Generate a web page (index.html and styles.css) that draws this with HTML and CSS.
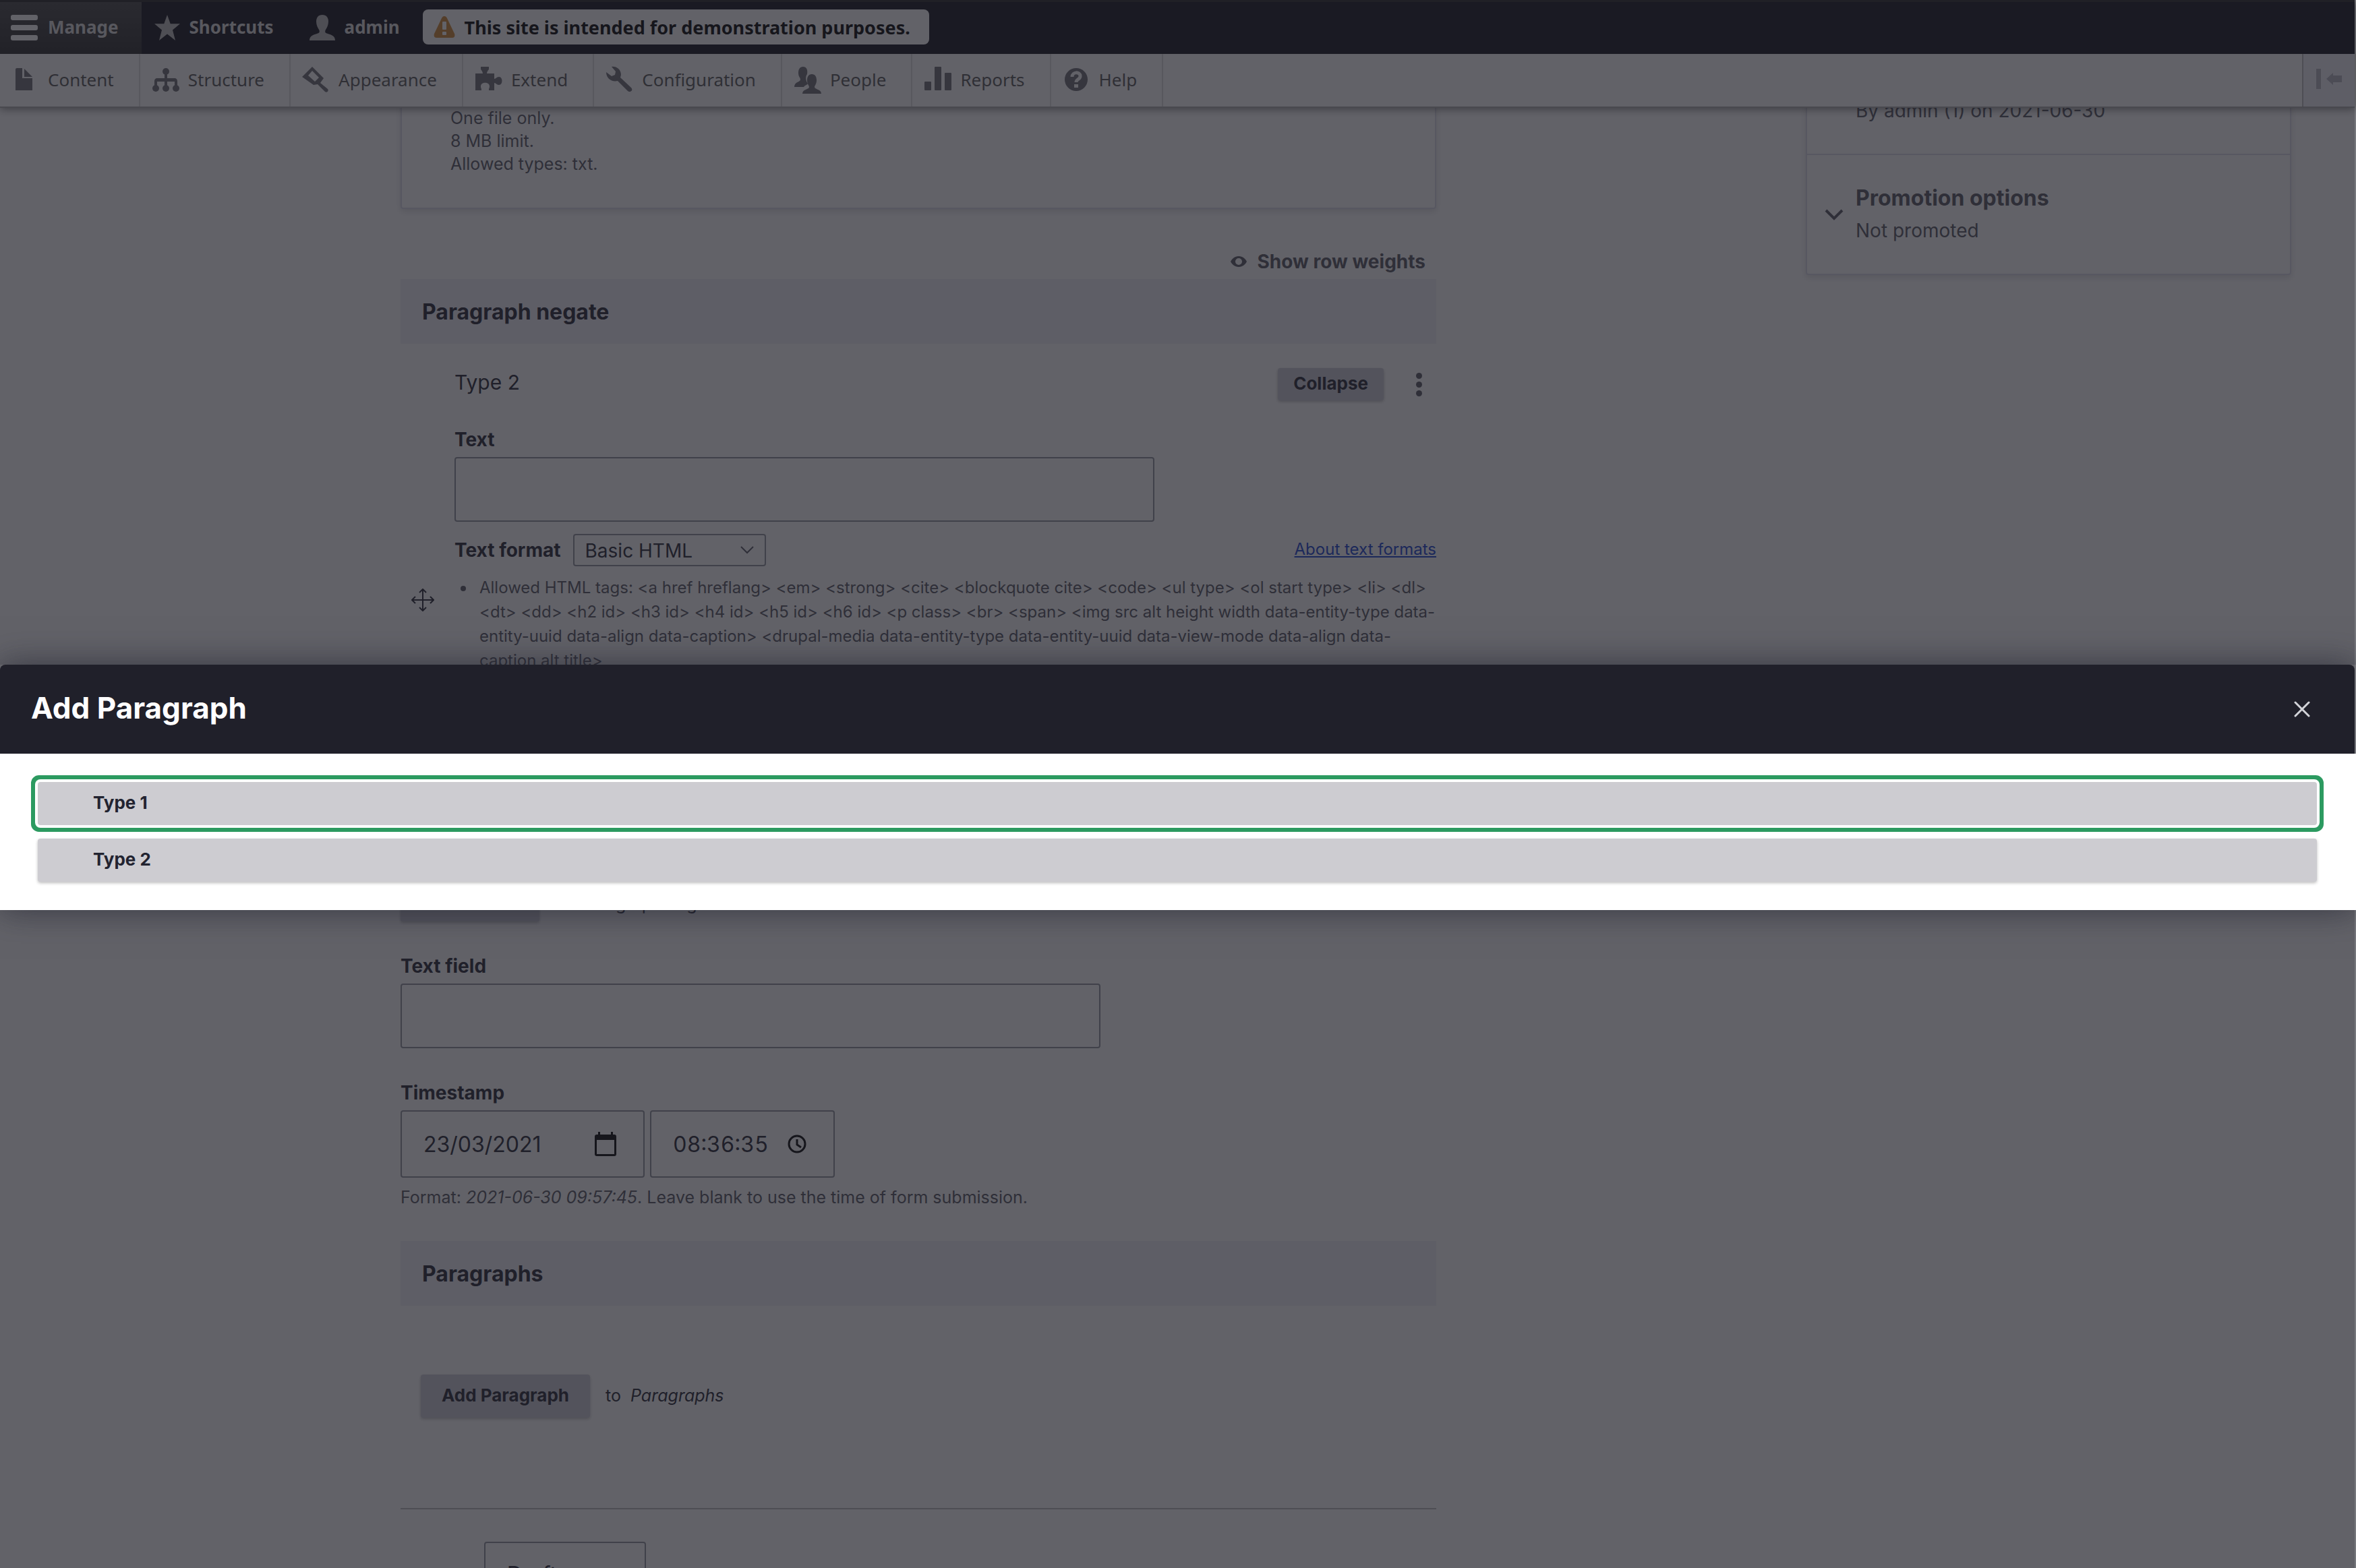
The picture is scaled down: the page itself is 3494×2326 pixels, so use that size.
FILE: index.html
```html
<!DOCTYPE html>
<html lang="en">
<head>
    <meta charset="UTF-8">
    <title>Edit content</title>
    <link rel="stylesheet" href="styles.css">
</head>
<body>

<header class="toolbar">
    <nav class="toolbar-bar">
        <a href="#" class="tab active">
            <svg class="icon light" viewBox="0 0 40 40"><rect x="-2" y="2" width="40" height="8" rx="3"/><rect x="-2" y="17" width="40" height="8" rx="3"/><rect x="-2" y="32" width="40" height="8" rx="3"/></svg>
            Manage
        </a>
        <a href="#" class="tab">
            <svg class="icon" viewBox="0 0 40 40"><path d="M20 2l4.7 13.300H39L28 24.500 32 40 20 30.500 8 40l4-15.500L1 15.300h14.300z"/></svg>
            Shortcuts
        </a>
        <a href="#" class="tab">
            <svg class="icon" viewBox="0 0 40 40"><path d="M20 2c-6 0-9 4-9 10 0 5 2 9 4 12 2 4 0 5-3 6C5 32 1 34 1 40h38c0-6-4-8-11-10-3-1-5-2-3-6 2-3 4-7 4-12 0-6-3-10-9-10z"/></svg>
            admin
        </a>
        <div class="notice">
            <svg class="notice-icon" viewBox="0 0 32 34"><path d="M16 1c2 0 3 1 4 3l11 23c1 3 0 6-3 6H4c-3 0-4-3-3-6L12 4c1-2 2-3 4-3z"/><rect class="mark" x="13" y="9" width="6" height="12" rx="1"/><rect class="mark" x="13" y="24" width="6" height="5" rx="1"/></svg>
            This site is intended for demonstration purposes.
        </div>
    </nav>
    <nav class="toolbar-tray">
        <a href="#" class="tray-link">
            <svg class="icon" viewBox="0 0 40 40"><path d="M7 3h8v15h15v18H5V5a2 2 0 0 1 2-2z"/><path d="M18 4l12 12H18z"/></svg>
            Content
        </a>
        <a href="#" class="tray-link">
            <svg class="icon" viewBox="0 0 40 40"><circle cx="20" cy="8" r="5"/><circle cx="5" cy="33" r="5"/><circle cx="20" cy="33" r="5"/><circle cx="35" cy="33" r="5"/><path d="M18 10h4v8h10c4 0 5 2 5 5v8h-4v-8H22v8h-4v-8H7v8H3v-8c0-3 1-5 5-5h10z"/></svg>
            Structure
        </a>
        <a href="#" class="tray-link">
            <svg class="icon" viewBox="0 0 40 40"><path fill-rule="evenodd" d="M14 1l17 17-5 7 11 9c2 3-1 6-4 4L22 27l-6 1L-1 16zM14 7L8 14l10 9 6-6z"/></svg>
            Appearance
        </a>
        <a href="#" class="tray-link">
            <svg class="icon" viewBox="0 0 40 40"><path d="M8 1h12v4c-3 3-3 6-3 6h11v8c3 0 3-3 7-3 6 0 6 12 0 12-4 0-4-3-7-3v11h-8c0-4 1-3 1-6 0-7-13-7-13 0 0 3 1 2 1 6H0V11h11s0-3-3-6z"/></svg>
            Extend
        </a>
        <a href="#" class="tray-link">
            <svg class="icon" viewBox="0 0 40 40"><path d="M8 1c7-1 14 4 14 12l-1 4 16 15c4 4-2 8-5 5L17 22C8 24 0 18 0 9l8 6 5-2 1-5z"/></svg>
            Configuration
        </a>
        <a href="#" class="tray-link">
            <svg class="icon" viewBox="0 0 40 40"><path d="M13 1c-5 0-7 4-7 9 0 6 3 7 3 10 0 4-9 3-9 11h14c2-3 5-3 6-5-3-4-4-10-1-14C20 5 18 1 13 1z"/><path d="M26 12c-5 0-7 4-7 9 0 6 3 8 3 10 0 4-10 3-10 10h28c0-7-10-6-10-10 0-2 3-4 3-10 0-5-2-9-7-9z"/></svg>
            People
        </a>
        <a href="#" class="tray-link">
            <svg class="icon" viewBox="0 0 40 40"><rect x="0" y="23" width="10" height="13" rx="1"/><rect x="15" y="1" width="10" height="35" rx="1"/><rect x="30" y="10" width="10" height="26" rx="1"/></svg>
            Reports
        </a>
        <a href="#" class="tray-link">
            <svg class="icon" viewBox="0 0 40 40"><circle cx="19" cy="20" r="17"/><path class="question" d="M13 16c0-8 12-8 12-1 0 5-6 4-6 9"/><rect class="question-dot" x="16" y="27" width="6" height="5"/></svg>
            Help
        </a>
        <button class="orientation" aria-label="Vertical orientation">
            <svg viewBox="0 0 38 30"><rect x="0" y="0" width="7" height="30"/><path d="M15 15l10-9v4h13v10H25v4z"/></svg>
        </button>
    </nav>
</header>

<div class="page">
    <main class="main">
        <div class="file-card">
            One file only.<br>
            8 MB limit.<br>
            Allowed types: txt.
        </div>

        <button class="row-weights">
            <svg viewBox="0 0 24 16"><path fill-rule="evenodd" d="M12 0c6 0 10 4 12 8-2 4-6 8-12 8S2 12 0 8c2-4 6-8 12-8zm0 3a5 5 0 1 0 0 10 5 5 0 0 0 0-10z"/></svg>
            Show row weights
        </button>

        <h4 class="section-title">Paragraph negate</h4>
        <div class="paragraph">
            <a href="#" class="handle" aria-label="Drag to re-order">
                <svg viewBox="0 0 34 34"><path d="M17 1v32M1 17h32M12 6l5-5 5 5M12 28l5 5 5-5M6 12l-5 5 5 5M28 12l5 5-5 5"/></svg>
            </a>
            <div class="paragraph-content">
                <div class="paragraph-top">
                    <span class="paragraph-type">Type 2</span>
                    <button class="button small">Collapse</button>
                    <button class="dots" aria-label="More actions"><i></i><i></i><i></i></button>
                </div>
                <label class="label" for="text">Text</label>
                <input class="textbox" type="text" id="text">
                <div class="format-row">
                    <label class="label" for="format">Text format</label>
                    <span class="select-wrap">
                        <select id="format"><option>Basic HTML</option></select>
                        <svg class="chevron" viewBox="0 0 20 12"><path d="M1 1l9 9 9-9"/></svg>
                    </span>
                    <a href="#" class="about">About text formats</a>
                </div>
                <ul class="tips">
                    <li>Allowed HTML tags: &lt;a href hreflang&gt; &lt;em&gt; &lt;strong&gt; &lt;cite&gt; &lt;blockquote cite&gt; &lt;code&gt; &lt;ul type&gt; &lt;ol start type&gt; &lt;li&gt; &lt;dl&gt; &lt;dt&gt; &lt;dd&gt; &lt;h2 id&gt; &lt;h3 id&gt; &lt;h4 id&gt; &lt;h5 id&gt; &lt;h6 id&gt; &lt;p class&gt; &lt;br&gt; &lt;span&gt; &lt;img src alt height width data-entity-type data-entity-uuid data-align data-caption&gt; &lt;drupal-media data-entity-type data-entity-uuid data-view-mode data-align data-caption alt title&gt;</li>
                </ul>
            </div>
        </div>

        <div class="add-row low">
            <button class="button">Add Type 2</button>
            <span>to &nbsp;Paragraph negate</span>
        </div>

        <div class="field">
            <label class="label" for="textfield">Text field</label>
            <input class="textbox" type="text" id="textfield">
        </div>

        <div class="field">
            <label class="label" for="date">Timestamp</label>
            <div class="timestamp">
                <span class="picker date">
                    <input type="text" id="date" value="23/03/2021">
                    <svg viewBox="0 0 32 36"><path fill-rule="evenodd" d="M5 0h3v4h16V0h3v4h2q3 0 3 3v26q0 3-3 3H3q-3 0-3-3V7q0-3 3-3h2zM3 12v21h26V12z"/></svg>
                </span>
                <span class="picker time">
                    <input type="text" aria-label="Time" value="08:36:35">
                    <svg class="clock" viewBox="0 0 28 28"><circle cx="14" cy="14" r="12"/><path d="M14 7v8l6 4"/></svg>
                </span>
            </div>
            <div class="description">Format: <em>2021-06-30 09:57:45</em>. Leave blank to use the time of form submission.</div>
        </div>

        <h4 class="section-title">Paragraphs</h4>
        <div class="add-row inset">
            <button class="button">Add Paragraph</button>
            <span>to &nbsp;<em>Paragraphs</em></span>
        </div>

        <div class="footer">
            <label class="label" for="state">Save as</label>
            <span class="select-wrap">
                <select id="state" class="large"><option>Draft</option></select>
                <svg class="chevron" viewBox="0 0 20 12"><path d="M1 1l9 9 9-9"/></svg>
            </span>
        </div>
    </main>

    <aside class="sidebar">
        <div class="side-item">
            <p>By admin (1) on 2021-06-30</p>
        </div>
        <div class="side-item">
            <svg class="side-chevron" viewBox="0 0 28 18"><path d="M2 2l12 12L26 2"/></svg>
            <h3>Promotion options</h3>
            <p>Not promoted</p>
        </div>
    </aside>
</div>

<div class="overlay"></div>

<div class="dialog-wrap">
    <section class="dialog" role="dialog" aria-label="Add Paragraph">
        <div class="dialog-header">
            <h2>Add Paragraph</h2>
            <button class="close" aria-label="Close">
                <svg viewBox="0 0 24 24"><path d="M2 2l20 20M22 2L2 22"/></svg>
            </button>
        </div>
        <div class="dialog-body">
            <button class="button wide focused">Type 1</button>
            <button class="button wide">Type 2</button>
        </div>
    </section>
</div>

</body>
</html>
```
FILE: styles.css
```css
* {
    box-sizing: border-box;
}

body {
    margin: 0;
    height: 100vh;
    overflow: hidden;
    background: #77787d;
    color: #222330;
    font-family: Inter, "Liberation Sans", sans-serif;
    font-size: 25px;
}

h2, h3, h4, p, ul {
    margin: 0;
}

button, input, select {
    font-family: inherit;
    color: inherit;
}

button {
    border: 0;
    padding: 0;
    background: none;
    cursor: pointer;
}

/* toolbar */
.toolbar {
    position: fixed;
    top: 0;
    left: 0;
    right: 2px;
    z-index: 10;
    font-family: "Noto Sans", "Open Sans", sans-serif;
    font-size: 26px;
    box-shadow: 0 2px 12px rgba(0, 0, 0, 0.5);
}

.toolbar a {
    display: flex;
    align-items: center;
    gap: 13px;
    padding: 0 34px 0 18px;
    text-decoration: none;
    white-space: nowrap;
}

.toolbar-bar {
    display: flex;
    align-items: center;
    height: 80px;
    background: #0f0f18;
    border-top: 3px solid #222;
}

.toolbar-bar .tab {
    height: 77px;
    padding-bottom: 3px;
    color: #ddd;
    font-weight: bold;
}

.toolbar-bar .active {
    background: linear-gradient(#444, #282828);
}

.icon {
    width: 40px;
    height: 40px;
    flex: none;
    overflow: visible;
    fill: #bbb;
}

.icon.light {
    fill: #fff;
}

.notice {
    display: flex;
    align-items: center;
    gap: 14px;
    height: 52px;
    margin-bottom: 3px;
    padding: 0 28px 0 16px;
    border-radius: 8px;
    background: #fff;
    color: #000;
    font-size: 27px;
    font-weight: bold;
}

.notice-icon {
    width: 32px;
    height: 34px;
    fill: #d08830;
}

.notice-icon .mark {
    fill: #fff;
}

.toolbar-tray {
    display: flex;
    height: 80px;
    background: #fff;
    border-bottom: 2px solid #aaa;
}

.toolbar .tray-link {
    padding: 0 37px 2px 18px;
    color: #565656;
    border-right: 2px solid #ddd;
}

.tray-link .icon {
    fill: #6b6b73;
}

.icon .question {
    fill: none;
    stroke: #fff;
    stroke-width: 5;
}

.icon .question-dot {
    fill: #fff;
}

.orientation {
    width: 78px;
    margin-left: auto;
    border-left: 2px solid #bbb;
    background: #f1f1f9;
}

.orientation svg {
    width: 38px;
    height: 30px;
    fill: #b4b4c0;
}

/* page */
.page {
    display: flex;
    align-items: flex-start;
    gap: 48px;
    margin-right: 2px;
    padding: 98px 94px 0;
    background: #fff;
}

.main {
    flex: 1;
    max-width: 1536px;
    margin: 0 auto;
}

.sidebar {
    width: 720px;
    border: 2px solid #dadae6;
    border-radius: 4px;
    box-shadow: 0 4px 10px rgba(34, 35, 48, 0.15);
    color: #545560;
    font-size: 28px;
    line-height: 40px;
}

.side-item {
    position: relative;
    padding: 44px 72px;
}

.side-item + .side-item {
    border-top: 2px solid #dadae6;
}

.side-item h3 {
    margin-bottom: 8px;
    font-size: 32px;
}

.side-chevron {
    position: absolute;
    left: 26px;
    top: 80px;
    width: 28px;
    height: 18px;
    fill: none;
    stroke: #545560;
    stroke-width: 4;
}

.file-card {
    padding: 58px 72px 48px;
    border: 2px solid #dadae6;
    border-radius: 4px;
    box-shadow: 0 4px 10px rgba(34, 35, 48, 0.15);
    color: #545560;
    line-height: 34px;
}

.row-weights {
    display: flex;
    align-items: center;
    gap: 16px;
    margin: 61px 16px 9px auto;
    color: #545560;
    font-size: 28px;
    font-weight: bold;
    line-height: 34px;
}

.row-weights svg {
    width: 24px;
    height: 16px;
    fill: #545560;
}

.section-title {
    padding: 33px 32px 31px;
    background: #f1f1f9;
    font-size: 32px;
    line-height: 32px;
}

.paragraph {
    display: flex;
    align-items: center;
}

.handle {
    width: 80px;
    padding-left: 16px;
}

.handle svg {
    display: block;
    width: 34px;
    height: 34px;
    fill: none;
    stroke: #222330;
    stroke-width: 2;
}

.paragraph-content {
    flex: 1;
    padding: 36px 0 271px;
}

.paragraph-top {
    display: flex;
    align-items: flex-start;
    margin-bottom: 40px;
    height: 50px;
}

.paragraph-type {
    margin-right: auto;
    font-size: 30px;
    line-height: 42px;
}

.dots {
    display: flex;
    flex-direction: column;
    align-items: center;
    justify-content: center;
    gap: 4px;
    width: 52px;
    height: 48px;
    margin-left: 26px;
}

.dots i {
    width: 9px;
    height: 9px;
    border-radius: 50%;
    background: #545560;
}

.label {
    display: block;
    font-size: 28px;
    font-weight: bold;
    line-height: 32px;
}

.textbox {
    display: block;
    width: 1038px;
    height: 96px;
    margin-top: 10px;
    padding: 0 32px;
    border: 2px solid #8e929c;
    border-radius: 4px;
    background: #fff;
    font-size: 32px;
}

.format-row {
    display: flex;
    align-items: center;
    gap: 18px;
    margin: 18px 0 14px;
}

.select-wrap {
    position: relative;
}

select {
    appearance: none;
    display: block;
    width: 286px;
    height: 48px;
    padding: 2px 16px 0;
    border: 2px solid #8e929c;
    border-radius: 4px;
    background: #fff;
    font-size: 28px;
}

select.large {
    width: 240px;
    height: 100px;
    padding: 0 32px 4px;
    font-size: 32px;
}

.chevron {
    position: absolute;
    right: 18px;
    top: 50%;
    width: 20px;
    height: 12px;
    margin-top: -6px;
    fill: none;
    stroke: #545560;
    stroke-width: 2;
    pointer-events: none;
}

.about {
    margin-left: auto;
    padding-bottom: 4px;
    color: #1440d0;
    font-size: 24px;
}

.tips {
    margin-right: -8px;
    padding-left: 31px;
    color: #545560;
    font-size: 24px;
    line-height: 36px;
}

.tips li {
    padding-left: 6px;
}

.button {
    height: 64px;
    padding: 0 31px 3px;
    border-radius: 4px;
    background: #cdcdd6;
    box-shadow: 0 2px 4px rgba(0, 0, 0, 0.25);
    color: #222330;
    font-size: 26px;
    font-weight: bold;
}

.button.small {
    height: 48px;
    padding: 0 23px 3px;
}

.add-row {
    display: flex;
    align-items: center;
    gap: 23px;
    margin: 34px 0 50px;
}

.add-row.low {
    align-items: flex-end;
    line-height: 32px;
}

.add-row.inset {
    margin: 102px 0 134px;
    padding-left: 30px;
}

.add-row span {
    padding-bottom: 2px;
}

.add-row.low span {
    padding-bottom: 10px;
}

.field {
    margin-bottom: 48px;
}

.field + .field {
    margin-top: 50px;
}

.timestamp {
    display: flex;
    gap: 8px;
    margin: 10px 0 12px;
}

.picker {
    display: flex;
    align-items: center;
    height: 100px;
    padding: 0 40px 0 32px;
    border: 2px solid #8e929c;
    border-radius: 4px;
    background: #fff;
}

.picker.date {
    width: 362px;
}

.picker.time {
    width: 274px;
    font-variant-numeric: tabular-nums;
}

.picker input {
    flex: 1;
    min-width: 0;
    padding: 0;
    border: 0;
    background: none;
    font-size: 32px;
    font-variant-numeric: inherit;
}

.picker svg {
    width: 32px;
    height: 36px;
    fill: #000;
}

.picker .clock {
    width: 28px;
    height: 28px;
    fill: none;
    stroke: #000;
    stroke-width: 3;
}

.description {
    color: #545560;
    line-height: 34px;
}

.footer {
    display: flex;
    align-items: center;
    gap: 18px;
    padding-top: 48px;
    border-top: 2px solid #bbb;
}

/* modal */
.overlay {
    position: fixed;
    top: 0;
    right: 2px;
    bottom: 0;
    left: 0;
    z-index: 20;
    background: rgba(31, 31, 40, 0.7);
}

.dialog-wrap {
    position: fixed;
    top: 10px;
    right: 0;
    bottom: 0;
    left: 0;
    z-index: 30;
    display: flex;
    align-items: center;
}

.dialog {
    width: 100%;
    box-shadow: 0 0 48px rgba(34, 35, 48, 0.7);
}

.dialog-header {
    display: flex;
    align-items: center;
    justify-content: space-between;
    height: 132px;
    margin-right: 2px;
    padding: 0 66px 0 46px;
    border-radius: 8px 8px 0 0;
    background: #20202a;
    color: #fff;
}

.dialog-header h2 {
    padding-bottom: 4px;
    font-size: 44px;
}

.close svg {
    display: block;
    width: 24px;
    height: 24px;
    fill: none;
    stroke: #d3d4d9;
    stroke-width: 3;
    stroke-linecap: round;
}

.dialog-body {
    display: flex;
    flex-direction: column;
    gap: 20px;
    padding: 42px 58px 42px 56px;
    background: #fff;
}

.button.wide {
    padding: 0 82px 3px;
    background: #cdccd1;
    text-align: left;
}

.button.focused {
    box-shadow: 0 0 0 4px #fff, 0 0 0 10px #2c9a60;
}
```
